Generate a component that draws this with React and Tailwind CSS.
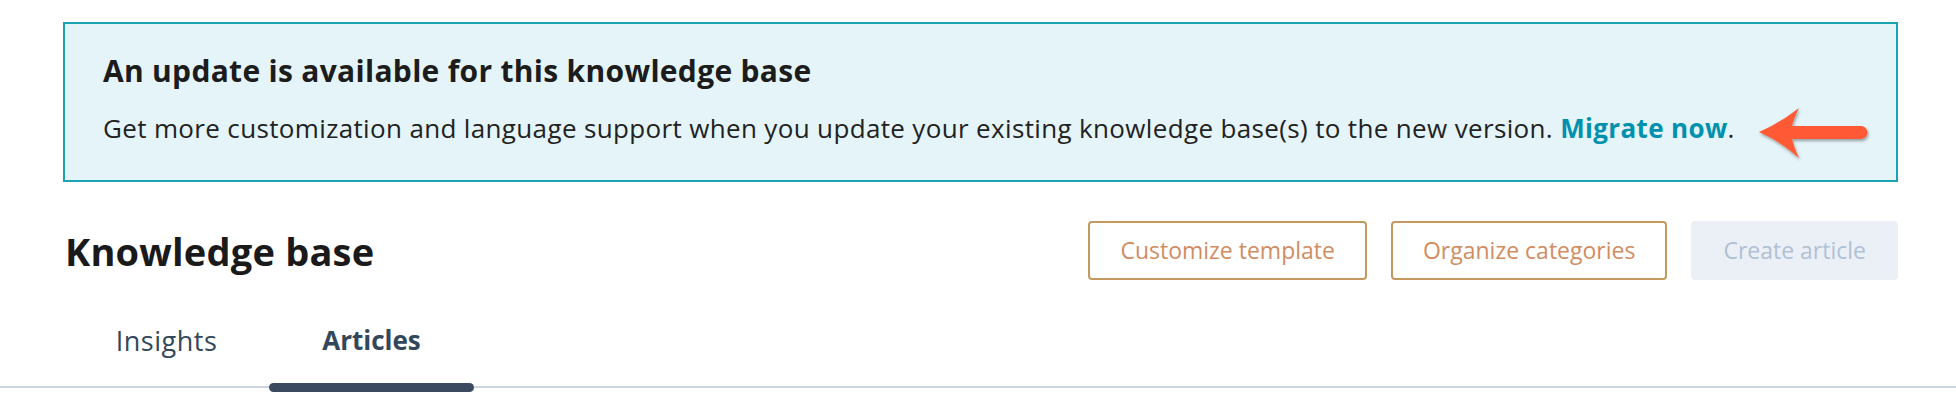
import { useState } from 'react';

const FONT = { fontFamily: '"Open Sans", "Liberation Sans", sans-serif' };

const TABS = ['Insights', 'Articles'];

function PointerArrow() {
  return (
    <svg
      className="absolute left-[1682px] top-[73px]"
      width="130"
      height="75"
      viewBox="0 0 130 75"
    >
      <defs>
        <filter id="arrowShadow" x="-20%" y="-30%" width="140%" height="170%">
          <feDropShadow dx="1" dy="2" stdDeviation="1.6" floodColor="#000" floodOpacity="0.35" />
        </filter>
      </defs>
      <path
        d="M12 35 Q33 26 52 11 Q47 21 45 29 L114 29 A6.5 6.5 0 0 1 114 42 L45 42 Q47 50 52 61 Q33 44 12 35 Z"
        fill="#ff5a36"
        filter="url(#arrowShadow)"
      />
    </svg>
  );
}

export default function App() {
  const [activeTab, setActiveTab] = useState('Articles');

  return (
    <div className="w-[1956px] h-[408px] bg-white overflow-hidden" style={FONT}>
      <div className="pl-[63px] pr-[58px] pt-[22px]">
        {/* Update banner */}
        <div className="relative border-2 border-[#1aa3b3] bg-[#e4f4f9] pl-[38px] pt-[28px] pb-[35px]">
          <h2 className="text-[30px] leading-[38px] tracking-[0.3px] font-bold text-[#1c1c1c]">
            An update is available for this knowledge base
          </h2>
          <p className="mt-[21px] text-[26px] leading-[34px] tracking-[0.35px] text-[#222222]">
            Get more customization and language support when you update your existing knowledge base(s) to the new version.{' '}
            <a href="#" className="font-bold text-[#0091ae]">Migrate now</a>.
          </p>
          <PointerArrow />
        </div>

        {/* Header row */}
        <div className="mt-[39px] flex items-center justify-between h-[59px]">
          <h1 className="pl-[2px] text-[38px] leading-[50px] tracking-[0.2px] font-bold text-[#1a1a1a]">Knowledge base</h1>
          <div className="flex items-center gap-[24px]">
            <button className="h-[59px] px-[30px] rounded-[4px] border-2 border-[#c4995f] bg-white text-[23px] text-[#d08d62]">
              Customize template
            </button>
            <button className="h-[59px] px-[30px] rounded-[4px] border-2 border-[#c4995f] bg-white text-[23px] text-[#d08d62]">
              Organize categories
            </button>
            <button className="h-[59px] px-[30px] rounded-[4px] border-2 border-[#eaf0f6] bg-[#eaf0f6] text-[23px] text-[#b0c1d4] cursor-not-allowed">
              Create article
            </button>
          </div>
        </div>
      </div>

      {/* Tabs */}
      <div className="mt-[43px] flex pl-[64px] border-b-2 border-[#cbd6e2]">
        {TABS.map((tab) => (
          <button
            key={tab}
            onClick={() => setActiveTab(tab)}
            className={`relative w-[205px] pb-[28px] text-center leading-[35px] text-[#33475b] ${
              activeTab === tab ? 'text-[26px] font-bold' : 'text-[27px] tracking-[0.5px] font-normal'
            }`}
          >
            {tab}
            {activeTab === tab && (
              <span className="absolute left-0 right-0 bottom-[-6px] h-[9px] rounded-full bg-[#3b4a5e]" />
            )}
          </button>
        ))}
      </div>
    </div>
  );
}
